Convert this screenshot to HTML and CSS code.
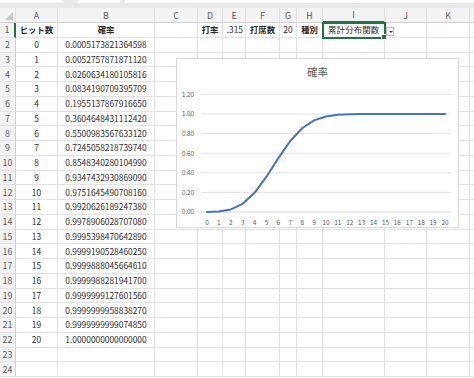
FILE: index.html
```html
<!DOCTYPE html>
<html lang="ja">
<head>
    <meta charset="UTF-8">
    <title>確率 - 累計分布関数</title>
    <link rel="stylesheet" href="styles.css">
</head>
<body>
    <div class="ribbon">
        <div class="box name-box"></div>
        <div class="box fx-box"></div>
        <div class="box formula-box"></div>
    </div>

    <div class="sheet">
        <table class="grid">
            <colgroup>
                <col class="w-head">
                <col class="w-a"><col class="w-b"><col class="w-c"><col class="w-d">
                <col class="w-e"><col class="w-f"><col class="w-g"><col class="w-h">
                <col class="w-i"><col class="w-j"><col class="w-k"><col class="w-rest">
            </colgroup>
            <thead>
                <tr>
                    <th class="corner"><span class="corner-mark"></span></th>
                    <th>A</th><th>B</th><th>C</th><th>D</th><th>E</th><th>F</th>
                    <th>G</th><th>H</th><th class="col-sel">I</th><th>J</th><th>K</th><th></th>
                </tr>
            </thead>
            <tbody id="rows">
                <tr>
                    <th class="row-sel">1</th>
                    <td class="c b">ヒット数</td>
                    <td class="c b">確率</td>
                    <td></td>
                    <td class="c b">打率</td>
                    <td class="r">.315</td>
                    <td class="c b">打席数</td>
                    <td class="c">20</td>
                    <td class="c b">種別</td>
                    <td class="selected"><span class="sel-text">累計分布関数</span><span class="handle"></span><span class="drop"></span></td>
                    <td></td>
                    <td></td>
                    <td></td>
                </tr>
            </tbody>
        </table>

        <div class="chart">
            <div class="chart-title">確率</div>
            <svg class="plot" id="plot" width="283" height="150" viewBox="0 0 283 150"></svg>
        </div>
    </div>

    <script>
        const kakuritsu = [
            "0.0005173821364598", "0.0052757871871120", "0.0260634180105816",
            "0.0834190709395709", "0.1955137867916650", "0.3604648431112420",
            "0.5500983567633120", "0.7245058218739740", "0.8548340280104990",
            "0.9347432930869090", "0.9751645490708160", "0.9920626189247380",
            "0.9978906028707080", "0.9995398470642890", "0.9999190528460250",
            "0.9999888045664610", "0.9999988281941700", "0.9999999127601560",
            "0.9999999958838270", "0.9999999999074850", "1.0000000000000000"
        ];

        const tbody = document.getElementById("rows");
        for (let r = 2; r <= 24; r++) {
            const tr = document.createElement("tr");
            const th = document.createElement("th");
            th.textContent = r;
            tr.appendChild(th);
            for (let c = 0; c < 12; c++) {
                const td = document.createElement("td");
                const i = r - 2;
                if (i < kakuritsu.length && c === 0) {
                    td.className = "c";
                    td.textContent = i;
                }
                if (i < kakuritsu.length && c === 1) {
                    td.className = "c";
                    td.textContent = kakuritsu[i];
                }
                tr.appendChild(td);
            }
            tbody.appendChild(tr);
        }

        // グラフ (y=0.00 が 133、1.00 ごとに 98px)
        const svg = document.getElementById("plot");
        const baseY = 133;
        const unit = 98;
        let html = "";
        const labels = ["0.00", "0.20", "0.40", "0.60", "0.80", "1.00", "1.20"];
        labels.forEach((t, k) => {
            const y = baseY - unit * 0.2 * k;
            const cls = k === 0 ? "axis" : "gridline";
            html += `<line class="${cls}" x1="24" x2="274" y1="${y}" y2="${y}"/>`;
            html += `<text class="ylabel" x="17" y="${y + 2.3}">${t}</text>`;
        });
        let pts = [];
        kakuritsu.forEach((v, i) => {
            const x = 29.95 + 11.9 * i;
            const y = baseY - unit * parseFloat(v);
            pts.push(x.toFixed(2) + "," + y.toFixed(2));
            html += `<text class="xlabel" x="${x}" y="${baseY + 12.5}">${i}</text>`;
        });
        html += `<polyline class="series" points="${pts.join(" ")}"/>`;
        svg.innerHTML = html;
    </script>
</body>
</html>
```

FILE: styles.css
```css
:root {
    --grid-line: #e2e2e2;
    --head-bg: #f3f3f3;
    --head-line: #d0d0d0;
    --head-text: #5c5c5c;
    --excel-green: #217346;
    --series-blue: #4472c4;
}

body {
    margin: 0;
    padding: 0;
    width: 474px;
    height: 378px;
    overflow: hidden;
    background-color: #ffffff;
    font-family: "Noto Sans CJK JP", "Noto Sans", sans-serif;
    color: #2b2b2b;
}

.ribbon {
    height: 8px;
    background-color: #e9e9e9;
    display: flex;
    align-items: flex-start;
}

.ribbon .box {
    height: 3px;
    background-color: #ffffff;
}

.name-box {
    width: 63px;
}

.fx-box {
    width: 42px;
    margin-left: 15px;
}

.formula-box {
    flex: 1;
    margin-left: 5px;
}

.sheet {
    position: relative;
}

.grid {
    table-layout: fixed;
    border-collapse: separate;
    border-spacing: 0;
    width: 490px;
    font-size: 8.4px;
}

.w-head { width: 16px; }
.w-a { width: 42px; }
.w-b { width: 97px; }
.w-c { width: 43px; }
.w-d { width: 25px; }
.w-e { width: 23px; }
.w-f { width: 34px; }
.w-g { width: 17px; }
.w-h { width: 26px; }
.w-i { width: 62px; }
.w-j { width: 42px; }
.w-k { width: 43px; }
.w-rest { width: 20px; }

.grid th,
.grid td {
    box-sizing: border-box;
    height: 14.76px;
    padding: 0 2px;
    line-height: 13px;
    white-space: nowrap;
    overflow: visible;
    border-right: 1px solid var(--grid-line);
    border-bottom: 1px solid var(--grid-line);
    font-weight: normal;
}

.grid thead th {
    height: 14.5px;
    background-color: var(--head-bg);
    color: var(--head-text);
    text-align: center;
    font-size: 8.8px;
    border-right: 1px solid #e0e0e0;
    border-bottom: 1px solid var(--head-line);
}

.grid tbody th {
    background-color: var(--head-bg);
    color: var(--head-text);
    text-align: center;
    font-size: 8.8px;
    padding: 0;
    border-right: 1px solid var(--head-line);
    border-bottom: 1px solid #e3e3e3;
}

.grid thead th.col-sel {
    border-bottom: 2px solid var(--excel-green);
}

.grid tbody th.row-sel {
    border-right: 2px solid var(--excel-green);
}

.corner {
    position: relative;
}

.corner-mark {
    position: absolute;
    right: 2px;
    bottom: 2px;
    width: 0;
    height: 0;
    border-left: 8px solid transparent;
    border-bottom: 8px solid #c8c8c8;
}

.grid .c {
    text-align: center;
}

.grid .r {
    text-align: right;
}

.grid .b {
    font-weight: bold;
}

.selected {
    position: relative;
    outline: 2px solid var(--excel-green);
    outline-offset: -1px;
}

.sel-text {
    padding-left: 3px;
    letter-spacing: 0.2px;
}

.handle {
    position: absolute;
    right: -3px;
    bottom: -3px;
    width: 4px;
    height: 4px;
    background-color: var(--excel-green);
    border: 1px solid #ffffff;
}

.drop {
    position: absolute;
    left: calc(100% + 2px);
    top: 4px;
    width: 8px;
    height: 9px;
    box-sizing: border-box;
    background-color: #ffffff;
    border: 1px solid #bdbdbd;
}

.drop::after {
    content: "";
    position: absolute;
    left: 1.5px;
    top: 3px;
    border-left: 2px solid transparent;
    border-right: 2px solid transparent;
    border-top: 2px solid #404040;
}

.chart {
    position: absolute;
    left: 176px;
    top: 50px;
    width: 283px;
    height: 170px;
    box-sizing: border-box;
    background-color: #ffffff;
    border: 1px solid #d9d9d9;
    box-shadow: 0 0 1px rgba(0, 0, 0, 0.08);
}

.chart-title {
    height: 20px;
    padding-top: 6px;
    text-align: center;
    font-size: 10.5px;
    line-height: 14px;
    color: #595959;
    box-sizing: border-box;
}

.plot {
    display: block;
    overflow: visible;
}

.gridline {
    stroke: #e4e4e4;
    stroke-width: 1;
}

.axis {
    stroke: #d6d6d6;
    stroke-width: 1;
}

.ylabel {
    font-size: 6.2px;
    fill: #595959;
    text-anchor: end;
}

.xlabel {
    font-size: 6.4px;
    fill: #595959;
    text-anchor: middle;
}

.series {
    fill: none;
    stroke: var(--series-blue);
    stroke-width: 2;
    stroke-linejoin: round;
    stroke-linecap: round;
}
```
